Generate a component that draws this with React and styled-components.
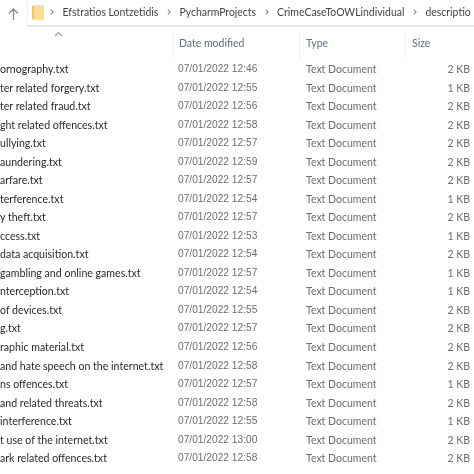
import React from "react";
import styled, { createGlobalStyle } from "styled-components";

const Global = createGlobalStyle`
  html, body { margin: 0; padding: 0; background: #fff; }
  body { font-family: Lato, "Open Sans", sans-serif; }
`;

const Page = styled.div`
  width: 474px;
  height: 474px;
  overflow: hidden;
  background: #fff;
  filter: blur(0.35px);
`;

const TopBar = styled.div`
  display: flex;
  align-items: center;
  height: 26px;
`;

const UpButton = styled.div`
  width: 27px;
  display: flex;
  justify-content: center;
  padding-top: 2px;
  color: #8a8a8a;
`;

const PathBox = styled.div`
  flex: 1;
  height: 25px;
  display: flex;
  align-items: center;
  gap: 8.5px;
  padding-left: 4px;
  border-bottom: 2px solid #e6e6e6;
  border-left: 1px solid #eeeeee;
  white-space: nowrap;
  overflow: hidden;
  font-size: 10.45px;
  color: #444;
`;

const Folder = styled.svg`
  width: 12px;
  height: 15px;
  flex: none;
  margin-right: -2.5px;
`;

const Sep = styled.svg`
  width: 4px;
  height: 6px;
  flex: none;
`;

const Header = styled.div`
  display: grid;
  grid-template-columns: 173px 126px 106px 69px;
  height: 30px;
  align-items: stretch;
  margin-top: 4px;
`;

const NameHead = styled.div`
  display: flex;
  justify-content: flex-start;
  padding: 1px 0 0 54px;
  box-sizing: border-box;
`;

const HeadCell = styled.div`
  display: flex;
  align-items: center;
  padding-left: 5px;
  padding-bottom: 4px;
  box-sizing: border-box;
  font-size: 10.5px;
  color: #5f6f80;
  border-left: 1px solid #eef0f2;
  &:nth-child(n + 3) {
    padding-left: 6px;
  }
`;

const List = styled.div`
  display: flex;
  flex-direction: column;
`;

const Row = styled.div`
  display: grid;
  grid-template-columns: 178px 128px 1fr;
  padding-right: 4px;
  height: 18.52px;
  align-items: center;
  font-size: 10.5px;
  line-height: 18px;
  white-space: nowrap;
`;

const Name = styled.div`
  color: #2a2a2a;
  overflow: hidden;
  font-size: 10.6px;
`;

const DateCell = styled.div`
  color: #6d6d6d;
  font-family: "Liberation Sans", Arial, sans-serif;
  font-size: 10.2px;
`;

const TypeSize = styled.div`
  display: flex;
  justify-content: space-between;
  color: #6d6d6d;
`;

const rows = [
  ["ornography.txt", "12:46", "2 KB"],
  ["ter related forgery.txt", "12:55", "1 KB"],
  ["ter related fraud.txt", "12:56", "2 KB"],
  ["ght related offences.txt", "12:58", "2 KB"],
  ["ullying.txt", "12:57", "2 KB"],
  ["aundering.txt", "12:59", "2 KB"],
  ["arfare.txt", "12:57", "2 KB"],
  ["terference.txt", "12:54", "1 KB"],
  ["y theft.txt", "12:57", "2 KB"],
  ["ccess.txt", "12:53", "1 KB"],
  ["data acquisition.txt", "12:54", "2 KB"],
  ["gambling and online games.txt", "12:57", "1 KB"],
  ["nterception.txt", "12:54", "1 KB"],
  ["of devices.txt", "12:55", "2 KB"],
  ["g.txt", "12:57", "2 KB"],
  ["raphic material.txt", "12:56", "2 KB"],
  ["and hate speech on the internet.txt", "12:58", "2 KB"],
  ["ns offences.txt", "12:57", "1 KB"],
  ["and related threats.txt", "12:58", "2 KB"],
  [" interference.txt", "12:55", "1 KB"],
  ["t use of the internet.txt", "13:00", "2 KB"],
  ["ark related offences.txt", "12:58", "2 KB"],
];

const crumbs = ["Efstratios Lontzetidis", "PycharmProjects", "CrimeCaseToOWLindividual", "descriptio"];

export default function App() {
  return (
    <Page>
      <Global />
      <TopBar>
        <UpButton>
          <svg width="11" height="12" viewBox="0 0 11 12" fill="none" stroke="currentColor" strokeWidth="1.3">
            <path d="M5.5 12V1M1 5.5 5.5 1 10 5.5" />
          </svg>
        </UpButton>
        <PathBox>
          <Folder viewBox="0 0 12 15">
            <path d="M1 0h10a1 1 0 0 1 1 1v13a1 1 0 0 1-1 1H1z" fill="#fbdf90" />
            <path d="M0 1h2v13H0z" fill="#f0c75e" />
          </Folder>
          {crumbs.map((c) => (
            <React.Fragment key={c}>
              <Sep viewBox="0 0 4 6" fill="none" stroke="#8a8a8a" strokeWidth="1.1">
                <path d="M.8.6 3.2 3 .8 5.4" />
              </Sep>
              <span>{c}</span>
            </React.Fragment>
          ))}
        </PathBox>
      </TopBar>
      <Header>
        <NameHead>
          <svg width="9" height="6" viewBox="0 0 9 6" fill="none" stroke="#9a9a9a" strokeWidth="1.1">
            <path d="M1 5 4.5 1.5 8 5" />
          </svg>
        </NameHead>
        <HeadCell>Date modified</HeadCell>
        <HeadCell>Type</HeadCell>
        <HeadCell>Size</HeadCell>
      </Header>
      <List>
        {rows.map(([name, time, size]) => (
          <Row key={name}>
            <Name>{name}</Name>
            <DateCell>07/01/2022 {time}</DateCell>
            <TypeSize>
              <span>Text Document</span>
              <span>{size}</span>
            </TypeSize>
          </Row>
        ))}
      </List>
    </Page>
  );
}
